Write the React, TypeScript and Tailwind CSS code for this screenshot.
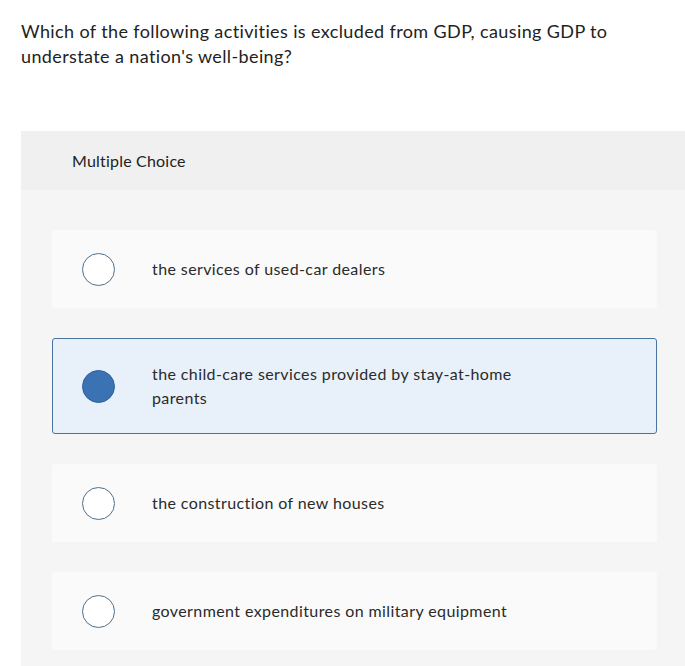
import React from 'react';

const options = [
    'the services of used-car dealers',
    'the child-care services provided by stay-at-home parents',
    'the construction of new houses',
    'government expenditures on military equipment',
];

export default function App() {
    const selected = 1;
    return (
        <div className="min-h-[666px] bg-white text-[#222] overflow-hidden" style={{ fontFamily: 'Lato, "Open Sans", sans-serif' }}>
            <p className="px-[21px] pt-[19px] text-[18px] leading-[25px] tracking-[0.38px] w-[650px]">
                Which of the following activities is excluded from GDP, causing GDP to understate a nation's well-being?
            </p>
            <div className="ml-[21px] mt-[62px] w-[680px]">
                <div className="bg-[#f0f0f0] h-[59px] flex items-center pl-[51px] text-[16px] tracking-[0.2px] text-[#222]">
                    Multiple Choice
                </div>
                <div className="bg-[#f5f5f5] pl-[31px] pt-[40px] pb-[20px] flex flex-col gap-[30px]">
                    {options.map((opt, i) => {
                        const isSel = i === selected;
                        return (
                            <div
                                key={i}
                                className={
                                    isSel
                                        ? 'w-[605px] flex items-center py-[23px] pl-[29px] pr-[140px] bg-[#e8f1fa] border border-[#4a74a0] rounded-[3px]'
                                        : 'w-[605px] min-h-[78px] flex items-center pl-[30px] pr-[140px] bg-[#fafafa] rounded-[3px]'
                                }
                            >
                                <div
                                    className={
                                        isSel
                                            ? 'w-[33px] h-[33px] shrink-0 rounded-full bg-[#3b72b3] border border-[#2f5f95]'
                                            : 'w-[33px] h-[33px] shrink-0 rounded-full bg-white border-[1.5px] border-[#4d6f8c]'
                                    }
                                />
                                <span className="ml-[37px] text-[16px] leading-6 tracking-[0.4px] text-[#2a2a2a]">{opt}</span>
                            </div>
                        );
                    })}
                </div>
            </div>
        </div>
    );
}
